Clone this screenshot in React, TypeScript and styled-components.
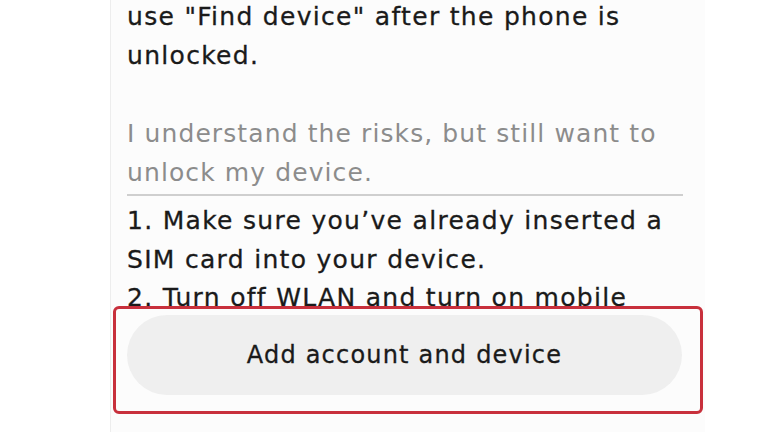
import React from "react";
import styled, { createGlobalStyle } from "styled-components";

const Global = createGlobalStyle`
  html, body { margin: 0; padding: 0; background: #ffffff; }
  body { font-family: "DejaVu Sans", "Noto Sans", sans-serif; }
  #root { width: 768px; height: 432px; overflow: hidden; }
`;

const Page = styled.div`
  width: 768px;
  height: 432px;
  display: flex;
  background: #ffffff;
`;

const Phone = styled.div`
  margin-left: 110px;
  width: 595px;
  height: 432px;
  display: flex;
  flex-direction: column;
  background: #fcfcfc;
  border-left: 1px solid #ededed;
  box-sizing: border-box;
`;

const Scroll = styled.div`
  height: 306px;
  overflow: hidden;
  padding: 0 22px 0 16px;
`;

const Inner = styled.div`
  margin-top: -2px;
`;

const Para = styled.p<{ $muted?: boolean }>`
  margin: 0;
  font-size: 25px;
  line-height: 38.5px;
  font-weight: 400;
  letter-spacing: ${(p) => (p.$muted ? "1.1px" : "1.3px")};
  color: ${(p) => (p.$muted ? "#8c8c8c" : "#1a1a1a")};
  -webkit-text-stroke: ${(p) => (p.$muted ? "0" : "0.3px")};
`;

const Gap = styled.div`
  height: 40px;
`;

const Divider = styled.div`
  height: 2px;
  background: #cfcfcf;
  margin: 2px 0 6px;
`;

const Bottom = styled.div`
  flex: 1;
  padding: 0 0 0 2px;
`;

const Highlight = styled.div`
  width: 590px;
  height: 108px;
  box-sizing: border-box;
  border: 3px solid #c8303c;
  border-radius: 6px;
  padding: 6px 18px 0 11px;
`;

const Pill = styled.button`
  width: 555px;
  height: 80px;
  border: none;
  border-radius: 40px;
  background: #efefef;
  font-family: "DejaVu Sans", "Noto Sans", sans-serif;
  font-size: 24px;
  font-weight: 400;
  letter-spacing: 1.2px;
  -webkit-text-stroke: 0.3px;
  color: #1a1a1a;
  display: flex;
  align-items: center;
  justify-content: center;
  padding: 0;
`;

export default function App() {
  return (
    <Page>
      <Global />
      <Phone>
        <Scroll>
          <Inner>
            <Para>use "Find device" after the phone is</Para>
            <Para>unlocked.</Para>
            <Gap />
            <Para $muted>I understand the risks, but still want to unlock my device.</Para>
            <Divider />
            <Para>1. Make sure you’ve already inserted a SIM card into your device.</Para>
            <Para>2. Turn off WLAN and turn on mobile data.</Para>
          </Inner>
        </Scroll>
        <Bottom>
          <Highlight>
            <Pill>Add account and device</Pill>
          </Highlight>
        </Bottom>
      </Phone>
    </Page>
  );
}
